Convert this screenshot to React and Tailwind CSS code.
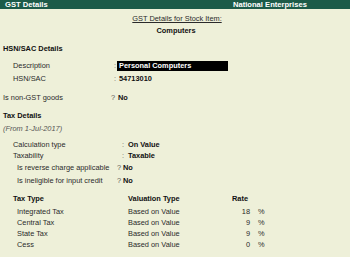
export default function App() {
  const rows = [
    { name: "Integrated Tax", rate: "18" },
    { name: "Central Tax", rate: "9" },
    { name: "State Tax", rate: "9" },
    { name: "Cess", rate: "0" },
  ];
  return (
    <div className="w-[350px] h-[257px] overflow-hidden bg-[#eef0d9] font-['Liberation_Sans',Arial,sans-serif] text-[7.4px] leading-[11px] text-[#2a2a2a]">
      <div className="h-[9px] bg-[#1c5b49] grid grid-cols-[233px_1fr] items-center text-white font-bold text-[7.6px] leading-[9px]">
        <span className="pl-[5px]">GST Details</span>
        <span>National Enterprises</span>
      </div>

      <div className="mt-[4px] h-[11px] text-center">
        <span className="underline underline-offset-[1px] pl-[4px]">GST Details for Stock Item:</span>
      </div>
      <div className="mt-[1px] h-[11px] text-center font-bold text-[#111] pl-[2px]">Computers</div>

      <div className="mt-[7px] h-[11px] pl-[3px] font-bold text-[#111]">HSN/SAC Details</div>

      <div className="mt-[6px] h-[11px] flex items-center">
        <span className="w-[114px] pl-[13px]">Description</span>
        <span className="w-[3px] text-[#666]">:</span>
        <span className="w-[111px] h-[10px] bg-black text-white font-bold leading-[10px] pl-[2px]">Personal Computers</span>
      </div>
      <div className="mt-[2px] h-[11px] flex items-center">
        <span className="w-[114px] pl-[13px]">HSN/SAC</span>
        <span className="w-[5px] text-[#666]">:</span>
        <span className="font-bold text-[#111]">54713010</span>
      </div>

      <div className="mt-[8px] h-[11px] flex items-center">
        <span className="w-[111px] pl-[3px]">Is non-GST goods</span>
        <span className="w-[7px] text-[#555]">?</span>
        <span className="font-bold text-[#111]">No</span>
      </div>

      <div className="mt-[7px] h-[11px] pl-[3px] font-bold text-[#111]">Tax Details</div>
      <div className="mt-[2px] h-[11px] pl-[3px] italic text-[#555]">(From 1-Jul-2017)</div>

      <div className="mt-[5px] h-[11px] flex items-center">
        <span className="w-[122px] pl-[13px]">Calculation type</span>
        <span className="w-[6px] text-[#666]">:</span>
        <span className="font-bold text-[#111]">On Value</span>
      </div>
      <div className="h-[11px] flex items-center">
        <span className="w-[122px] pl-[13px]">Taxability</span>
        <span className="w-[6px] text-[#666]">:</span>
        <span className="font-bold text-[#111]">Taxable</span>
      </div>
      <div className="mt-[1px] h-[11px] flex items-center">
        <span className="w-[117px] pl-[17px] whitespace-nowrap">Is reverse charge applicable</span>
        <span className="w-[6px] text-[#555]">?</span>
        <span className="font-bold text-[#111]">No</span>
      </div>
      <div className="mt-[2px] h-[11px] flex items-center">
        <span className="w-[117px] pl-[17px] whitespace-nowrap">Is ineligible for input credit</span>
        <span className="w-[6px] text-[#555]">?</span>
        <span className="font-bold text-[#111]">No</span>
      </div>

      <div className="mt-[7px] h-[11px] flex items-center font-bold text-[#111]">
        <span className="w-[128px] pl-[13px]">Tax Type</span>
        <span className="w-[104px]">Valuation Type</span>
        <span>Rate</span>
      </div>
      <div className="mt-[2px] flex flex-col">
        {rows.map((r) => (
          <div key={r.name} className="h-[11px] flex items-center">
            <span className="w-[128px] pl-[17px]">{r.name}</span>
            <span className="w-[104px]">Based on Value</span>
            <span className="w-[18px] text-right">{r.rate}</span>
            <span className="pl-[8px]">%</span>
          </div>
        ))}
      </div>
    </div>
  );
}
